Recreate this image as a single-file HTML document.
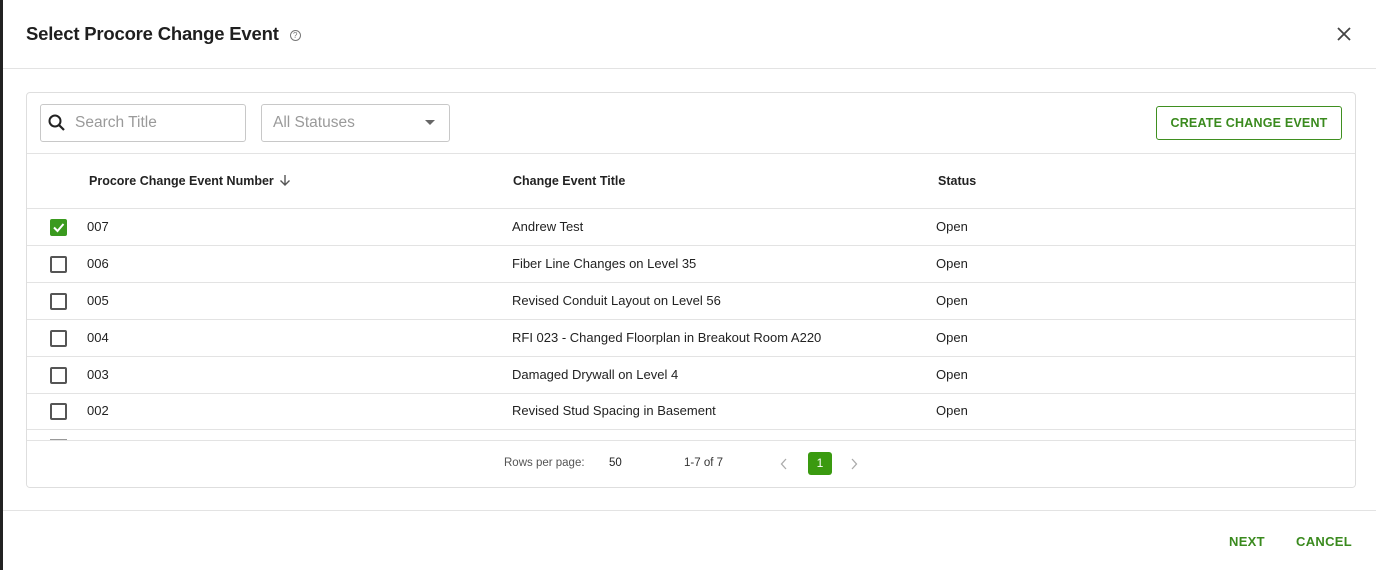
<!DOCTYPE html>
<html><head><style>
*{box-sizing:border-box;margin:0;padding:0}
body{width:1376px;height:570px;background:#fff;font-family:"Liberation Sans",Arial,sans-serif;color:#222;position:relative;overflow:hidden}
.abs{position:absolute}
.lstrip{left:0;top:0;width:3px;height:570px;background:#222}
.title{left:26px;top:23px;font-size:18.5px;font-weight:bold;color:#1f1f1f;letter-spacing:-.2px}
.hr{left:3px;right:0;height:1px;background:#e3e3e3}
.card{left:26px;top:92px;width:1330px;height:396px;border:1px solid #dedede;border-radius:4px;overflow:hidden}
.box{border:1px solid #c8c8c8;border-radius:3px;height:38px;top:11px}
.ph{color:#9a9a9a;font-size:15.5px;top:9px}
.btn{left:1129px;top:13px;width:186px;height:34px;border:1px solid #3f8f20;border-radius:3px;color:#3a8a1e;font-size:12.5px;font-weight:bold;letter-spacing:.2px;text-align:center;line-height:32px}
.row{left:0;right:0;height:37px;border-bottom:1px solid #e3e3e3;font-size:13px}
.row span{position:absolute;top:10px}
.cb{position:absolute;left:23px;top:10px;width:17px;height:17px;border:2px solid #555;border-radius:2px}
.cb.on{background:#3a9a1e;border-color:#3a9a1e}
.hd{font-weight:bold;font-size:12.5px;position:absolute;top:81px}
.ft{font-size:11.5px;color:#555;top:364px}
.act{font-size:13px;font-weight:bold;color:#3a8a1e;letter-spacing:.3px;top:534px}
</style></head><body>
<div class="abs lstrip"></div>
<div class="abs title">Select Procore Change Event <span style="display:inline-block;width:11px;height:11px;border:1.3px solid #777;border-radius:50%;font-size:8px;line-height:9px;text-align:center;color:#777;vertical-align:2px;margin-left:6px;font-weight:normal">?</span></div>
<svg class="abs" style="left:1336px;top:26px" width="16" height="16"><path d="M2 2L14 14M14 2L2 14" stroke="#444" stroke-width="1.8"/></svg>
<div class="abs hr" style="top:68px"></div>
<div class="abs card">
 <div class="abs box" style="left:13px;width:206px">
  <svg class="abs" style="left:6px;top:8px" width="20" height="20"><circle cx="8" cy="8" r="5.5" fill="none" stroke="#222" stroke-width="2"/><path d="M12 12L17 17" stroke="#222" stroke-width="2.2"/></svg>
  <span class="abs ph" style="left:34px">Search Title</span></div>
 <div class="abs box" style="left:234px;width:189px"><span class="abs ph" style="left:11px">All Statuses</span>
  <svg class="abs" style="left:163px;top:15px" width="10" height="6"><path d="M0 0L10 0L5 5Z" fill="#666"/></svg></div>
 <div class="abs btn">CREATE CHANGE EVENT</div>
 <div class="abs" style="left:0;right:0;top:60px;height:1px;background:#e3e3e3"></div>
 <div class="hd" style="left:62px;top:81px">Procore Change Event Number <svg width="12" height="12" style="vertical-align:-1px;margin-left:2px"><path d="M6 1V11M1.5 6.5L6 11L10.5 6.5" fill="none" stroke="#555" stroke-width="1.4"/></svg></div>
 <div class="hd" style="left:486px">Change Event Title</div>
 <div class="hd" style="left:911px">Status</div>
 <div class="abs" style="left:0;right:0;top:115px;height:1px;background:#e3e3e3"></div>
 <div class="abs row" style="top:116px"><div class="cb on"><svg width="13" height="13" style="position:absolute;left:0;top:0"><path d="M2 6.5L5.5 10L11.5 3" fill="none" stroke="#fff" stroke-width="2"/></svg></div><span style="left:60px">007</span><span style="left:485px">Andrew Test</span><span style="left:909px">Open</span></div>
 <div class="abs row" style="top:153px"><div class="cb"></div><span style="left:60px">006</span><span style="left:485px">Fiber Line Changes on Level 35</span><span style="left:909px">Open</span></div>
 <div class="abs row" style="top:190px"><div class="cb"></div><span style="left:60px">005</span><span style="left:485px">Revised Conduit Layout on Level 56</span><span style="left:909px">Open</span></div>
 <div class="abs row" style="top:227px"><div class="cb"></div><span style="left:60px">004</span><span style="left:485px">RFI 023 - Changed Floorplan in Breakout Room A220</span><span style="left:909px">Open</span></div>
 <div class="abs row" style="top:264px"><div class="cb"></div><span style="left:60px">003</span><span style="left:485px">Damaged Drywall on Level 4</span><span style="left:909px">Open</span></div>
 <div class="abs row" style="top:300px"><div class="cb"></div><span style="left:60px">002</span><span style="left:485px">Revised Stud Spacing in Basement</span><span style="left:909px">Open</span></div>
 <div class="abs" style="left:23px;top:346px;width:17px;height:2px;background:#999"></div>
 <div class="abs" style="left:0;right:0;top:347px;height:50px;background:#fff;border-top:1px solid #e3e3e3"></div>
 <div class="abs ft" style="left:477px">Rows per page:</div>
 <div class="abs ft" style="left:582px;color:#222">50</div>
 <div class="abs ft" style="left:657px;color:#333">1-7 of 7</div>
 <svg class="abs" style="left:753px;top:365px" width="8" height="12"><path d="M6 1L1.5 6L6 11" fill="none" stroke="#aaa" stroke-width="1.3"/></svg>
 <div class="abs" style="left:781px;top:359px;width:24px;height:23px;background:#3a9a10;border-radius:3px;color:#fff;font-size:12px;text-align:center;line-height:23px">1</div>
 <svg class="abs" style="left:823px;top:365px" width="8" height="12"><path d="M2 1L6.5 6L2 11" fill="none" stroke="#aaa" stroke-width="1.3"/></svg>
</div>
<div class="abs hr" style="top:510px"></div>
<div class="abs act" style="left:1229px">NEXT</div>
<div class="abs act" style="left:1296px">CANCEL</div>
</body></html>
